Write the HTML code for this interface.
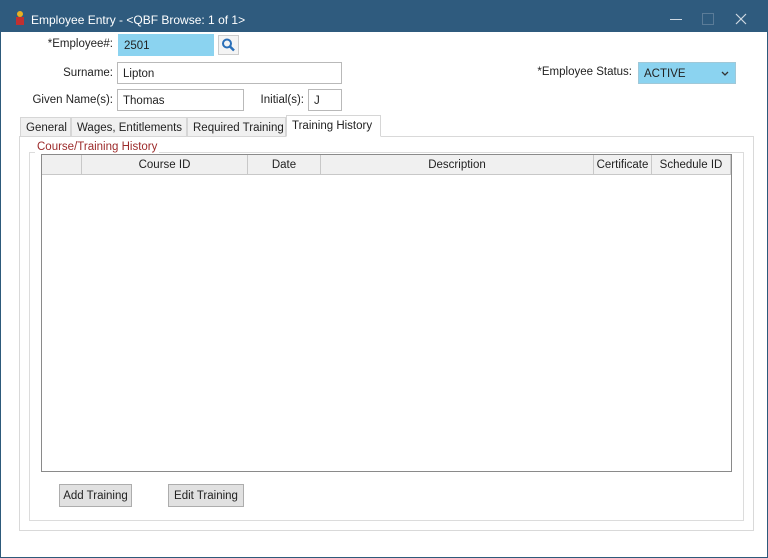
<!DOCTYPE html>
<html><head><style>
*{box-sizing:border-box}
body{margin:0;width:768px;height:558px;background:#fff;font-family:"Liberation Sans",sans-serif;font-size:11.5px;color:#222;position:relative;overflow:hidden}
.a{position:absolute}
.lbl{position:absolute;text-align:right;white-space:nowrap}
.in{position:absolute;border:1px solid #b9b9b9;background:#fff;padding:5px 5px 0;white-space:nowrap}
.tab{position:absolute;top:117px;height:20px;border:1px solid #d6d6d6;background:#f0f0f0;padding:4px 5px 0;white-space:nowrap}
.th{position:absolute;top:0;height:20px;border-right:1px solid #c8c8c8;text-align:center;line-height:20px}
.btn{position:absolute;top:484px;height:23px;background:#e1e1e1;border:1px solid #adadad;text-align:center;line-height:22px}
</style></head><body>
<div class="a" style="left:0;top:0;width:768px;height:558px;border:1px solid #2d5a7b;border-top:none"></div>
<div class="a" style="left:0;top:0;width:768px;height:32px;background:#2f5b7e;color:#fff;font-size:12px">
 <div class="a" style="left:17px;top:11px;width:6px;height:6px;border-radius:3px;background:#e8b020"></div>
 <div class="a" style="left:16px;top:17px;width:8px;height:8px;background:#c03030"></div>
 <div class="a" style="left:31px;top:13px">Employee Entry - &lt;QBF Browse: 1 of 1&gt;</div>
 <div class="a" style="left:670px;top:19px;width:12px;height:1px;background:#cfd9e2"></div>
 <div class="a" style="left:702px;top:13px;width:12px;height:12px;border:1px solid #5b7c98"></div>
 <svg class="a" style="left:735px;top:13px" width="12" height="12"><path d="M1 1L11 11M11 1L1 11" stroke="#cfd9e2" stroke-width="1.2"/></svg>
</div>
<div class="lbl" style="right:655px;top:38px">*Employee#:</div>
<div class="in" style="left:118px;top:34px;width:96px;height:22px;background:#8bd3f0;border-color:#8bd3f0">2501</div>
<div class="a" style="left:218px;top:35px;width:21px;height:20px;border:1px solid #ccc;background:#f4f4f4">
<svg width="19" height="18"><circle cx="8" cy="7.5" r="4" fill="none" stroke="#2a6fb8" stroke-width="2"/><line x1="11" y1="10.5" x2="15" y2="14.5" stroke="#2a6fb8" stroke-width="2.5"/></svg></div>
<div class="lbl" style="right:655px;top:67px">Surname:</div>
<div class="in" style="left:117px;top:62px;width:225px;height:22px">Lipton</div>
<div class="lbl" style="right:655px;top:94px">Given Name(s):</div>
<div class="in" style="left:117px;top:89px;width:127px;height:22px">Thomas</div>
<div class="lbl" style="right:464px;top:94px">Initial(s):</div>
<div class="in" style="left:308px;top:89px;width:34px;height:22px">J</div>
<div class="lbl" style="right:136px;top:66px">*Employee Status:</div>
<div class="in" style="left:638px;top:62px;width:98px;height:22px;background:#8bd3f0;border-color:#a0c8d8">ACTIVE<svg class="a" style="right:6px;top:8px" width="8" height="6"><path d="M1 1L4 4L7 1" stroke="#333" stroke-width="1.3" fill="none"/></svg></div>
<div class="a" style="left:19px;top:136px;width:735px;height:395px;border:1px solid #d9d9d9"></div>
<div class="tab" style="left:20px;width:51px">General</div>
<div class="tab" style="left:71px;width:116px">Wages, Entitlements</div>
<div class="tab" style="left:187px;width:99px">Required Training</div>
<div class="tab" style="left:286px;top:115px;width:95px;height:22px;background:#fff;border-bottom-color:#fff">Training History</div>
<div class="a" style="left:29px;top:152px;width:715px;height:369px;border:1px solid #dcdcdc"></div>
<div class="a" style="left:35px;top:141px;background:#fff;padding:0 2px;color:#9c2a2a">Course/Training History</div>
<div class="a" style="left:41px;top:154px;width:691px;height:318px;border:1px solid #8a8a8a">
 <div class="a" style="left:0;top:0;width:689px;height:20px;background:#f0f0f0;border-bottom:1px solid #c8c8c8"></div>
 <div class="th" style="left:0;width:40px"></div>
 <div class="th" style="left:40px;width:166px">Course ID</div>
 <div class="th" style="left:206px;width:73px">Date</div>
 <div class="th" style="left:279px;width:273px">Description</div>
 <div class="th" style="left:552px;width:58px">Certificate</div>
 <div class="th" style="left:610px;width:79px">Schedule ID</div>
</div>
<div class="btn" style="left:59px;width:73px">Add Training</div>
<div class="btn" style="left:168px;width:76px">Edit Training</div>
</body></html>
